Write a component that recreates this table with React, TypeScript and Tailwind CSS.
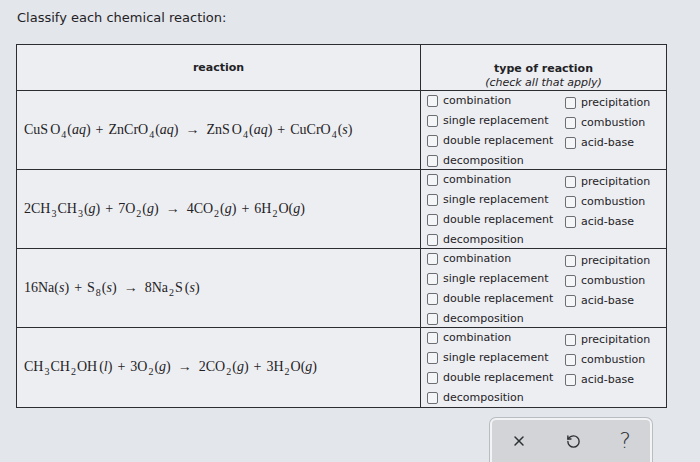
import { X, RotateCcw } from "lucide-react";

const sans = "font-['DejaVu_Sans',Verdana,sans-serif]";
const serif = "font-['Liberation_Serif','Times_New_Roman',serif]";

const leftTypes = ["combination", "single replacement", "double replacement", "decomposition"];
const rightTypes = ["precipitation", "combustion", "acid-base"];

const Sub = ({ children }: { children: React.ReactNode }) => (
  <sub className="relative top-[4px] mx-[1px] align-baseline text-[10px]">{children}</sub>
);

const S = ({ children }: { children: React.ReactNode }) => (
  <span className="italic">{children}</span>
);

const Gap = () => <span className="inline-block w-[2px]" />;
const Arrow = () => <span className="mx-[7px] text-[14px]">→</span>;
const Plus = () => <span className="mx-[5px]">+</span>;

const reactions: React.ReactNode[] = [
  <>
    CuS<Gap />O<Sub>4</Sub>(<S>aq</S>)<Plus />ZnCrO<Sub>4</Sub>(<S>aq</S>)<Arrow />ZnS<Gap />O<Sub>4</Sub>(<S>aq</S>)<Plus />CuCrO<Sub>4</Sub>(<S>s</S>)
  </>,
  <>
    2CH<Sub>3</Sub>CH<Sub>3</Sub>(<S>g</S>)<Plus />7O<Sub>2</Sub>(<S>g</S>)<Arrow />4CO<Sub>2</Sub>(<S>g</S>)<Plus />6H<Sub>2</Sub>O(<S>g</S>)
  </>,
  <>
    16Na(<S>s</S>)<Plus />S<Sub>8</Sub>(<S>s</S>)<Arrow />8Na<Sub>2</Sub>S<Gap />(<S>s</S>)
  </>,
  <>
    CH<Sub>3</Sub>CH<Sub>2</Sub>OH<Gap />(<S>l</S>)<Plus />3O<Sub>2</Sub>(<S>g</S>)<Arrow />2CO<Sub>2</Sub>(<S>g</S>)<Plus />3H<Sub>2</Sub>O(<S>g</S>)
  </>,
];

const Box = ({ label }: { label: string }) => (
  <label className="flex h-[20px] items-center gap-[5px]">
    <span className="h-[12px] w-[11px] rounded-[2px] border border-[#6b6e72] bg-[#f4f5f6]" />
    <span>{label}</span>
  </label>
);

export default function App() {
  return (
    <div className={`h-[462px] w-[700px] overflow-hidden bg-[#e3e6ea] text-[#1f2226] ${sans}`}>
      <div className="px-[17px] pt-[9px] text-[13px] leading-[18px]">Classify each chemical reaction:</div>

      <div className="ml-[16px] mt-[17px] w-[651px] border border-[#2b2d30] bg-[#eceef1]">
        <div className="grid h-[46px] grid-cols-[404px_1fr] border-b border-[#2b2d30] text-[11px]">
          <div className="border-r border-[#2b2d30] pt-[15px] text-center font-bold">reaction</div>
          <div className="pt-[17px] text-center leading-[14px]">
            <div className="font-bold">type of reaction</div>
            <div className="italic">(check all that apply)</div>
          </div>
        </div>

        {reactions.map((r, i) => (
          <div
            key={i}
            className={`grid h-[79px] grid-cols-[404px_1fr] ${i < 3 ? "border-b border-[#2b2d30]" : ""}`}
          >
            <div className={`flex items-center border-r border-[#2b2d30] pl-[7px] text-[14px] ${serif}`}>
              <div className="-mt-[4px]">{r}</div>
            </div>
            <div className="flex pl-[6px] text-[11px] leading-[20px]">
              <div className="w-[138px]">
                {leftTypes.map((t) => (
                  <Box key={t} label={t} />
                ))}
              </div>
              <div className="pt-[2px]">
                {rightTypes.map((t) => (
                  <Box key={t} label={t} />
                ))}
              </div>
            </div>
          </div>
        ))}
      </div>

      <div className="ml-[490px] mt-[10px] h-[50px] w-[162px] rounded-[6px] border-[2px] border-[#f2f3f5] bg-[#d2d4d7] shadow-[0_0_0_1px_#b9bcc0]">
        <div className="flex h-full items-center justify-between px-[19px] pb-[4px] text-[#2d3034]">
          <X className="h-[16px] w-[16px]" strokeWidth={2.2} />
          <RotateCcw className="h-[15px] w-[15px]" strokeWidth={2.2} />
          <span className="text-[22px] font-light leading-none">?</span>
        </div>
      </div>
    </div>
  );
}
